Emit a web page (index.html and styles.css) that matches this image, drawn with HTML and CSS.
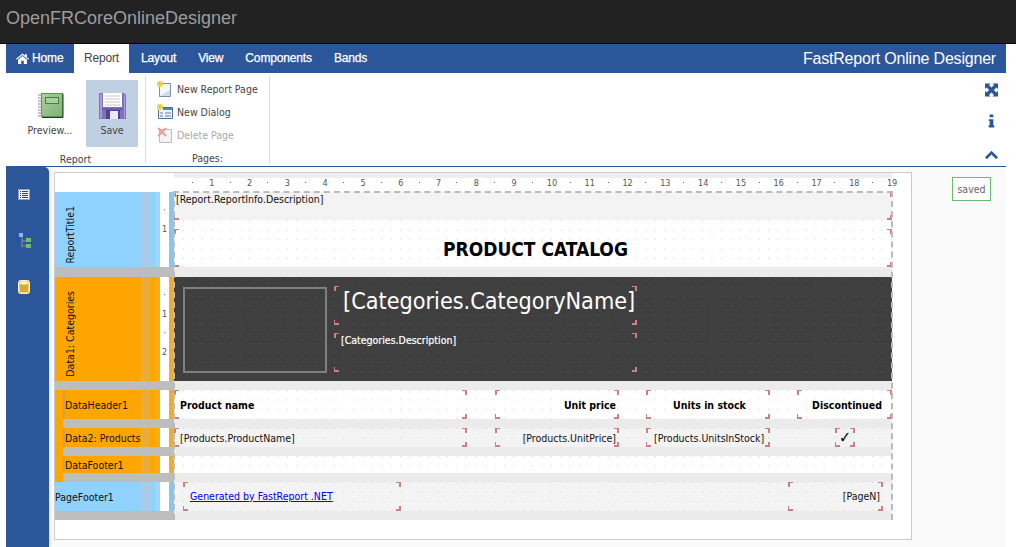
FILE: index.html
```html
<!DOCTYPE html>
<html lang="en">
<head>
<meta charset="utf-8">
<title>OpenFRCoreOnlineDesigner</title>
<link rel="stylesheet" href="styles.css">
</head>
<body>
<header class="topbar">OpenFRCoreOnlineDesigner</header>
<div class="app">
  <nav class="tabs">
    <span class="tab tab-home"><svg class="home-icon" viewBox="0 0 14 12"><path d="M7 .6 0 6.400l.7.9L7 2.100l6.300 5.200.7-.9-2.300-1.900V1.200h-1.900v1.500zM2.200 7.400V12h3.400V8.500h2.800V12h3.400V7.400L7 3.400z" fill="#fff"/></svg>Home</span>
    <span class="tab tab-active">Report</span>
    <span class="tab">Layout</span>
    <span class="tab">View</span>
    <span class="tab">Components</span>
    <span class="tab">Bands</span>
    <span class="brand">FastReport Online Designer</span>
  </nav>
  <section class="ribbon">
    <div class="group group-report">
      <div class="group-items">
        <div class="big-btn btn-preview">
          <svg class="big-icon" viewBox="0 0 27 27">
            <defs><linearGradient id="gb" x1="0" y1="0" x2="1" y2="1"><stop offset="0" stop-color="#a9d09b"/><stop offset="1" stop-color="#7fb077"/></linearGradient></defs>
            <rect x="4.500" y="1.500" width="21" height="23" fill="url(#gb)" stroke="#5c9258"/>
            <path d="M26 2v23.500H5" fill="none" stroke="#1f3a1f"/>
            <rect x="8.500" y="5.500" width="13" height="6" fill="#a6d299" stroke="#4a7d48"/>
            <path d="M1 3h5M1 6h5M1 9h5M1 12h5M1 15h5M1 18h5M1 21h5M1 24h5" stroke="#8a8a8a" stroke-width="1.200" stroke-dasharray="4 1"/>
          </svg>
          <span class="big-label">Preview...</span>
        </div>
        <div class="big-btn btn-save">
          <svg class="big-icon" viewBox="0 0 27 27">
            <path d="M0 1h25l2 2v24H0z" fill="#7f71bd"/>
            <path d="M1 26V2h2v24zM25 3h1v23h-1z" fill="#a99fd8"/>
            <rect x="4" y="1" width="19" height="14" fill="#fff"/>
            <path d="M6 4h15M6 7h15M6 10h15M6 13h15" stroke="#c9c9c9"/>
            <rect x="7" y="18" width="14" height="9" fill="#4f4590"/>
            <rect x="11" y="19" width="8" height="8" fill="#e9e9ef"/>
            <rect x="3" y="16" width="21" height="2" fill="#6a5dab"/>
          </svg>
          <span class="big-label">Save</span>
        </div>
      </div>
      <div class="group-title">Report</div>
    </div>
    <div class="group group-pages">
      <div class="page-items">
        <div class="small-btn">
          <svg class="small-icon" viewBox="0 0 16 16"><path d="M2.500 2.500h11v13h-11z" fill="#f4f7fb" stroke="#7d8fa8"/><path d="M3 15h10V9z" fill="#cfdcec"/><rect x="0" y="0" width="6" height="6" fill="#f7e27c"/><path d="M3 0v6M0 3h6" stroke="#d9b93a"/></svg>
          New Report Page
        </div>
        <div class="small-btn">
          <svg class="small-icon" viewBox="0 0 16 16"><path d="M1.500 3.500h14v11h-14z" fill="#eef3f9" stroke="#4d6f96"/><path d="M2 4h13v2H2z" fill="#4e88c7"/><path d="M3 9h3M8 9h6M3 12h3M8 12h6" stroke="#5c7ea6"/><rect x="0" y="0" width="6" height="6" fill="#f7e27c"/><path d="M3 0v6M0 3h6" stroke="#d9b93a"/></svg>
          New Dialog
        </div>
        <div class="small-btn small-disabled">
          <svg class="small-icon" viewBox="0 0 16 16"><path d="M2.500 2.500h12v13h-12z" fill="#f3f3f3" stroke="#bcbcbc"/><path d="M1 1l8 8M9 1L1 9" stroke="#eb9f98" stroke-width="2"/></svg>
          Delete Page
        </div>
      </div>
      <div class="group-title">Pages:</div>
    </div>
    <div class="ribbon-side">
      <svg class="side-icon" viewBox="0 0 14 14"><path d="M0 0h6L4.300 1.700 7 4.400l2.700-2.700L8 0h6v6l-1.700-1.700L9.600 7l2.700 2.700L14 8v6H8l1.700-1.700L7 9.600l-2.700 2.700L6 14H0V8l1.700 1.700L4.400 7 1.700 4.300 0 6z" fill="#2b579a"/></svg>
      <svg class="side-icon" viewBox="0 0 14 14"><path d="M5 0h4v3H5zM4 5h5v6.500h1V14H4v-2.500h1V7H4z" fill="#2b579a"/></svg>
      <svg class="side-icon side-chevron" viewBox="0 0 14 14"><path d="M7 2.500 14 9.500 12 11.500 7 6.500 2 11.500 0 9.500z" fill="#2b579a"/></svg>
    </div>
  </section>
  <main class="work">
    <aside class="sidebar">
      <svg class="tool tool-table" viewBox="0 0 12 11"><rect x=".5" y=".5" width="11" height="10" fill="#f2f5fa" stroke="#8ea0bd"/><path d="M2 2.500h1M2 4.500h1M2 6.500h1M2 8.500h1M4 2.500h6M4 4.500h6M4 6.500h6M4 8.500h6" stroke="#3a3f52"/></svg>
      <svg class="tool tool-tree" viewBox="0 0 12 16"><path d="M3 4v10M3 8h4M3 13h4" stroke="#8b8f96"/><rect x="0" y="0" width="4" height="4" fill="#8fb3ea"/><rect x="7" y="5" width="5" height="4" fill="#6fc06a"/><rect x="7" y="11" width="5" height="4" fill="#6fc06a"/></svg>
      <svg class="tool tool-db" viewBox="0 0 12 14"><rect x=".5" y=".5" width="11" height="13" rx="2" fill="#f5d25f" stroke="#fff3c4"/><rect x="2" y="4" width="8" height="8" fill="#d8a93c"/><ellipse cx="6" cy="3" rx="4" ry="1.500" fill="#fff6d5"/></svg>
    </aside>
    <div class="sheet">
      <div class="ruler-top"></div>
      <div class="ruler">
        <span class="rt">1</span><span class="rt">2</span><span class="rt">3</span><span class="rt">4</span><span class="rt">5</span><span class="rt">6</span><span class="rt">7</span><span class="rt">8</span><span class="rt">9</span><span class="rt">10</span><span class="rt">11</span><span class="rt">12</span><span class="rt">13</span><span class="rt">14</span><span class="rt">15</span><span class="rt">16</span><span class="rt">17</span><span class="rt">18</span><span class="rt">19</span>
      </div>
      <div class="page-outline"></div>

      <div class="band blue h-title">
        <div class="label label-v"><span>ReportTitle1</span></div>
        <div class="vruler"><span>·</span><span>1</span></div>
        <div class="body dotted">
          <div class="obj o-desc">[Report.ReportInfo.Description]</div>
          <div class="obj o-title">PRODUCT CATALOG</div>
        </div>
      </div>
      <div class="sep sep-first"></div>

      <div class="band orange h-cat">
        <div class="label label-v"><span>Data1: Categories</span></div>
        <div class="vruler"><span>·</span><span>1</span><span>·</span><span>2</span></div>
        <div class="body dark">
          <div class="obj o-pic"></div>
          <div class="obj o-catname">[Categories.CategoryName]</div>
          <div class="obj o-catdesc">[Categories.Description]</div>
        </div>
      </div>
      <div class="sep"></div>

      <div class="band orange h-head nested">
        <div class="label"><span>DataHeader1</span></div>
        <div class="vruler"></div>
        <div class="body dotted">
          <div class="obj c1 b">Product name</div>
          <div class="obj c2 b">Unit price</div>
          <div class="obj c3 b">Units in stock</div>
          <div class="obj c4 b">Discontinued</div>
        </div>
      </div>
      <div class="sep sep-nested"></div>

      <div class="band orange h-data nested">
        <div class="label label-low"><span>Data2: Products</span></div>
        <div class="vruler"></div>
        <div class="body dotted grey">
          <div class="obj c1">[Products.ProductName]</div>
          <div class="obj c2">[Products.UnitPrice]</div>
          <div class="obj c3">[Products.UnitsInStock]</div>
          <div class="obj c5">✓</div>
        </div>
      </div>
      <div class="sep sep-nested"></div>

      <div class="band orange h-foot nested">
        <div class="label label-low"><span>DataFooter1</span></div>
        <div class="vruler"></div>
        <div class="body dotted"></div>
      </div>
      <div class="sep sep-nested"></div>

      <div class="band blue h-page">
        <div class="label label-page"><span>PageFooter1</span></div>
        <div class="vruler"></div>
        <div class="body dotted grey">
          <div class="obj o-link"><a class="link">Generated by FastReport .NET</a></div>
          <div class="obj o-pagen">[PageN]</div>
        </div>
      </div>
      <div class="sep"></div>
    </div>
    <div class="status"><span class="saved">saved</span></div>
  </main>
</div>
</body>
</html>
```
FILE: styles.css
```css
* { box-sizing: border-box; }
html, body { margin: 0; height: 100%; overflow: hidden; background: #fff; }
body { font-family: "DejaVu Sans Condensed", "DejaVu Sans", sans-serif; font-stretch: condensed; font-size: 10.5px; color: #222; }

.topbar {
  height: 44px; background: #222; border-bottom: 1px solid #080808; color: #9d9d9d;
  font: 18px/36px "Liberation Sans", sans-serif; padding-left: 6px;
}
.app { width: 1000px; margin-left: 6px; }

.tabs { height: 29px; background: #2b579a; display: flex; align-items: stretch; color: #fff; font: 12px/29px "Liberation Sans", sans-serif; letter-spacing: -.15px; -webkit-text-stroke: .25px #fff; }
.tab { padding: 0 11px; }
.tab-home { width: 68px; padding: 0 0 0 10px; display: flex; align-items: center; gap: 3px; }
.home-icon { width: 13px; height: 11px; }
.tab-active { width: 55px; padding: 0; text-align: center; background: #fff; color: #444; -webkit-text-stroke: 0; margin-right: 1px; }
.brand { margin-left: auto; padding-right: 10px; font: 16px/29px "Liberation Sans", sans-serif; letter-spacing: -.2px; -webkit-text-stroke: 0; }

.ribbon { height: 94px; background: #fff; border-bottom: 1px solid #2b579a; display: flex; color: #444; position: relative; }
.group { border-right: 1px solid #ddd; margin: 3px 0; display: flex; flex-direction: column; }
.group-report { width: 140px; }
.group-pages { width: 124px; }
.group-items { display: flex; height: 71px; padding: 4px 0 0 8px; }
.group-title { text-align: center; line-height: 14px; padding-top: 5px; color: #444; }
.big-btn { width: 52px; height: 67px; display: flex; flex-direction: column; align-items: center; position: relative; }
.btn-preview { width: 72px; }
.btn-save { background: #c0cfe2; }
.big-icon { width: 27px; height: 27px; margin-top: 12px; }
.big-label { margin-top: 3px; line-height: 16px; white-space: nowrap; }
.page-items { height: 71px; padding: 1px 0 0 11px; }
.small-btn { display: flex; align-items: center; gap: 4px; height: 23px; white-space: nowrap; }
.small-icon { width: 16px; height: 16px; }
.small-disabled { color: #aaa; }
.ribbon-side { margin-left: auto; width: 30px; display: flex; flex-direction: column; align-items: center; padding-top: 10px; gap: 17px; }
.side-icon { width: 13px; height: 14px; }
.side-chevron { margin-top: 3px; }

.work { height: 380px; background: #fafafa; display: flex; }
.sidebar { width: 43px; background: #2b579a; border-top-right-radius: 5px; display: flex; flex-direction: column; align-items: center; box-shadow: 1px 0 3px #ddd; }
.tool { display: block; }
.tool-table { width: 12px; height: 11px; margin-top: 22px; margin-left: -7px; }
.tool-tree { width: 12px; height: 16px; margin-top: 33px; margin-left: -5px; }
.tool-db { width: 12px; height: 14px; margin-top: 31px; margin-left: -7px; }

.sheet { width: 858px; height: 368px; margin: 5px 0 0 5px; background: #fff; border: 1px solid #ccc; position: relative; }
.ruler-top { height: 5px; margin-left: 119px; width: 718px; background: #eee; }
.ruler { height: 14px; padding-left: 137.9px; display: flex; font-size: 9px; line-height: 10px; color: #555; }
.rt { width: 37.8px; flex: none; text-align: center; position: relative; }
.rt::before { content: ""; position: absolute; left: -1px; top: 4px; width: 1px; height: 1px; background: #666; }

.page-outline { position: absolute; left: 118px; top: 18px; width: 720px; height: 329px; border: 2px dashed #bbb; border-bottom: 0; z-index: 5; pointer-events: none; }

.band { display: flex; width: 837px; }
.h-title { height: 75px; }
.h-cat { height: 104px; }
.h-head { height: 29px; }
.h-data { height: 19px; }
.h-foot { height: 17px; }
.h-page { height: 29px; }

.label { width: 105px; flex: none; color: #111; font-size: 10.5px; white-space: nowrap; display: flex; align-items: center; }
.label-low { padding-top: 1px; }
.blue { background: #8fd2ff; }
.orange { background: #ffa500; }
.blue .label { background-image: linear-gradient(90deg, transparent 86px, #a9cbe6 86px, #a9cbe6 95px, transparent 95px, transparent 100px, #9fd6fb 100px); }
.orange .label { background-image: linear-gradient(90deg, transparent 86px, #e9ad3c 86px, #e9ad3c 95px, transparent 95px, transparent 100px, #fbaa1c 100px); }
.nested .label { background-image: linear-gradient(90deg, transparent 8px, #d6a040 8px, #d6a040 10px, transparent 10px, transparent 86px, #e9ad3c 86px, #e9ad3c 95px, transparent 95px, transparent 100px, #fbaa1c 100px); }
.label-v span { writing-mode: vertical-rl; transform: rotate(180deg); margin-left: 9px; align-self: flex-end; padding-top: 4px; font-size: 10.5px; }
.nested .label span { margin-left: 10px; }
.label-page span { margin-left: 0; }
.vruler { width: 14px; flex: none; padding: 9px 5px 0 0; display: flex; flex-direction: column; background: linear-gradient(90deg, #fff 9px, transparent 9px); color: #555; font-size: 9px; text-align: center; }
.vruler span { height: 18.9px; line-height: 18.9px; width: 9px; }
.blue .vruler { background-color: #8ec4ea; }
.orange .vruler { background-color: #e9ad3c; }

.body { width: 718px; flex: none; position: relative; background-color: #fff; }
.dotted { background-image: radial-gradient(circle at .5px .5px, #cdcdcd .6px, transparent .7px); background-size: 9.45px 9.45px; background-position: 9px 0; }
.grey { background-color: #f3f3f3; }
.dark { background-color: #3f3f3f; background-image: radial-gradient(circle at .5px .5px, #5a5a5a .6px, transparent .7px); background-size: 9.45px 9.45px; background-position: 9px 0; }

.sep { height: 9px; background: linear-gradient(90deg, #bdbdbd 119px, #ebebeb 119px); width: 837px; }
.sep-first { height: 10px; }
.sep-nested { background: linear-gradient(90deg, #ffa500 8px, #bdbdbd 8px, #bdbdbd 119px, #ebebeb 119px); }

.obj {
  position: absolute; white-space: nowrap; color: #111; font-size: 10.5px;
  background-repeat: no-repeat;
  --m: #cc8080;
  background-image:
    linear-gradient(var(--m), var(--m)), linear-gradient(var(--m), var(--m)),
    linear-gradient(var(--m), var(--m)), linear-gradient(var(--m), var(--m)),
    linear-gradient(var(--m), var(--m)), linear-gradient(var(--m), var(--m)),
    linear-gradient(var(--m), var(--m)), linear-gradient(var(--m), var(--m));
  background-size: 5px 1px, 2px 5px, 5px 1px, 2px 5px, 5px 2px, 1px 5px, 5px 2px, 2px 5px;
  background-position: 0 0, 0 0, 100% 0, 100% 0, 0 100%, 0 100%, 100% 100%, 100% 100%;
}
.o-desc { left: 0; top: 0; width: 718px; height: 28px; background-color: #f3f3f3; padding: 0 2px; line-height: 14px; }
.o-title { left: 0; top: 37px; width: 718px; height: 38px; font-weight: 700; font-size: 19px; line-height: 40px; padding-left: 269px; color: #000; }
.o-pic { left: 9px; top: 9.500px; width: 144px; height: 86px; border: 2px solid #7f7f7f; background-image: none; }
.o-catname { left: 160px; top: 9px; width: 303px; height: 39px; font-size: 23.2px; line-height: 30px; color: #fff; padding-left: 9px; }
.o-catdesc { left: 160px; top: 56px; width: 303px; height: 39px; line-height: 14px; color: #fff; padding-left: 7px; -webkit-text-stroke: .2px #fff; }

.c1, .c2, .c3, .c4 { top: 0; height: 100%; display: flex; align-items: center; }
.b { font-weight: 700; color: #000; }
.c1 { left: 0; width: 293px; padding-left: 6px; }
.c2 { left: 321px; width: 124px; justify-content: flex-end; padding-right: 3px; }
.c3 { left: 472px; width: 124px; padding-left: 8px; }
.c3.b { justify-content: center; padding-left: 3px; }
.c4 { left: 623px; width: 95px; justify-content: flex-end; padding-right: 10px; }
.c5 { left: 661px; top: 0; width: 20px; height: 100%; text-align: center; line-height: 19px; font-family: "DejaVu Sans", sans-serif; font-size: 16px; color: #000; }
.o-link { left: 9px; top: 0; width: 218px; height: 29px; padding-left: 7px; line-height: 29px; }
.link { color: #00e; text-decoration: underline; }
.o-pagen { left: 614px; top: 0; width: 95px; height: 29px; line-height: 29px; text-align: right; padding-right: 3px; }

.status { flex: 1; position: relative; }
.saved { display: block; position: absolute; left: 40px; top: 10px; width: 39px; height: 24px; border: 1px solid #6cbb6c; color: #666; text-align: center; line-height: 22px; background: #fff; }
```
